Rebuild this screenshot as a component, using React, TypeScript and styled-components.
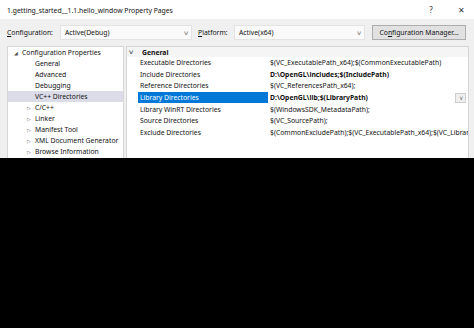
import styled, { createGlobalStyle } from 'styled-components';

const GlobalStyle = createGlobalStyle`
  html, body {
    margin: 0;
    padding: 0;
    background: #000;
  }
  body {
    font-family: 'Noto Sans', 'Open Sans', sans-serif;
    font-size: 6.8px;
    color: #111;
  }
`;

const Dialog = styled.div`
  width: 474px;
  height: 158px;
  background: #f0f0f0;
  display: flex;
  flex-direction: column;
  overflow: hidden;
`;

const TitleBar = styled.div`
  flex-shrink: 0;
  height: 19px;
  background: #fff;
  display: flex;
  align-items: center;
  padding-left: 7px;
`;

const Title = styled.div`
  flex: 1;
  padding-top: 1px;
`;

const TitleButtons = styled.div`
  display: flex;
  margin-right: -2px;
`;

const TitleButton = styled.div`
  width: 30px;
  text-align: center;
  font-size: 8px;
  color: #333;
`;

const Toolbar = styled.div`
  flex-shrink: 0;
  height: 27px;
  display: flex;
  align-items: center;
  padding: 0 8px 0 7px;
`;

const Label = styled.span<{ width: number }>`
  width: ${(p) => p.width}px;
  u {
    text-decoration: underline;
  }
`;

const Combo = styled.div<{ width: number }>`
  width: ${(p) => p.width}px;
  height: 15px;
  box-sizing: border-box;
  border: 1px solid #e3e3e3;
  background: #fafafa;
  display: flex;
  align-items: center;
  justify-content: space-between;
  padding: 0 3px 0 4px;
  margin-right: 6px;
`;

const Chevron = styled.span`
  color: #888;
  font-size: 6px;
  transform: scaleX(1.4);
`;

const Button = styled.div`
  margin-left: auto;
  width: 94px;
  height: 15px;
  box-sizing: border-box;
  border: 1px solid #adadad;
  background: #e1e1e1;
  display: flex;
  align-items: center;
  justify-content: center;
`;

const Main = styled.div`
  flex: 1;
  min-height: 0;
  display: flex;
  gap: 2px;
  padding: 0 5px 0 7px;
`;

const Panel = styled.div<{ width: number }>`
  width: ${(p) => p.width}px;
  box-sizing: border-box;
  border: 1px solid #d5d5d5;
  border-bottom: none;
  background: #fff;
  overflow: hidden;
`;

const TreeRow = styled.div<{ depth: number; selected?: boolean }>`
  height: 11px;
  display: flex;
  align-items: center;
  padding-left: ${(p) => 6 + p.depth * 13}px;
  background: ${(p) => (p.selected ? '#dcdce8' : 'transparent')};
  white-space: nowrap;
`;

const Expander = styled.span`
  width: 8px;
  font-size: 5px;
  color: #555;
`;

const GroupRow = styled.div`
  height: 10px;
  display: flex;
  align-items: center;
  font-weight: 700;
  background: #f5f5f5;
`;

const GroupToggle = styled.span`
  width: 12px;
  padding-left: 3px;
  font-size: 6px;
  color: #555;
  font-weight: 400;
  transform: scaleX(1.4);
`;

const PropRow = styled.div`
  height: 11.6px;
  display: flex;
  align-items: center;
  padding-left: 11px;
  white-space: nowrap;
`;

const PropName = styled.div<{ selected?: boolean }>`
  width: 130px;
  height: 100%;
  display: flex;
  align-items: center;
  padding-left: 2px;
  box-sizing: border-box;
  background: ${(p) => (p.selected ? '#0078d7' : 'transparent')};
  color: ${(p) => (p.selected ? '#fff' : 'inherit')};
`;

const PropValue = styled.div<{ bold?: boolean }>`
  flex: 1;
  min-width: 0;
  padding-left: 2px;
  font-weight: ${(p) => (p.bold ? 700 : 400)};
  display: flex;
  align-items: center;
  height: 100%;
`;

const ValueText = styled.span`
  flex: 1;
  overflow: hidden;
`;

const DropButton = styled.span`
  width: 11px;
  height: 10px;
  margin-right: 2px;
  box-sizing: border-box;
  border: 1px solid #cfcfcf;
  background: #eee;
  display: flex;
  align-items: center;
  justify-content: center;
  font-size: 6px;
  color: #777;
  font-weight: 400;
`;

const tree: { label: string; depth: number; expander?: string; selected?: boolean }[] = [
  { label: 'Configuration Properties', depth: 0, expander: '◢' },
  { label: 'General', depth: 1 },
  { label: 'Advanced', depth: 1 },
  { label: 'Debugging', depth: 1 },
  { label: 'VC++ Directories', depth: 1, selected: true },
  { label: 'C/C++', depth: 1, expander: '▷' },
  { label: 'Linker', depth: 1, expander: '▷' },
  { label: 'Manifest Tool', depth: 1, expander: '▷' },
  { label: 'XML Document Generator', depth: 1, expander: '▷' },
  { label: 'Browse Information', depth: 1, expander: '▷' },
  { label: 'Build Events', depth: 1, expander: '▷' },
];

const props: { name: string; value: string; bold?: boolean; selected?: boolean }[] = [
  { name: 'Executable Directories', value: '$(VC_ExecutablePath_x64);$(CommonExecutablePath)' },
  { name: 'Include Directories', value: 'D:\\OpenGL\\includes;$(IncludePath)', bold: true },
  { name: 'Reference Directories', value: '$(VC_ReferencesPath_x64);' },
  { name: 'Library Directories', value: 'D:\\OpenGL\\lib;$(LibraryPath)', bold: true, selected: true },
  { name: 'Library WinRT Directories', value: '$(WindowsSDK_MetadataPath);' },
  { name: 'Source Directories', value: '$(VC_SourcePath);' },
  {
    name: 'Exclude Directories',
    value: '$(CommonExcludePath);$(VC_ExecutablePath_x64);$(VC_LibraryPath_x64)',
  },
];

const App = () => (
  <>
    <GlobalStyle />
    <Dialog>
      <TitleBar>
        <Title>1.getting_started__1.1.hello_window Property Pages</Title>
        <TitleButtons>
          <TitleButton>?</TitleButton>
          <TitleButton>✕</TitleButton>
        </TitleButtons>
      </TitleBar>

      <Toolbar>
        <Label width={53}>
          <u>C</u>onfiguration:
        </Label>
        <Combo width={132}>
          Active(Debug)
          <Chevron>∨</Chevron>
        </Combo>
        <Label width={36}>
          <u>P</u>latform:
        </Label>
        <Combo width={131}>
          Active(x64)
          <Chevron>∨</Chevron>
        </Combo>
        <Button>
          Co<u>n</u>figuration Manager...
        </Button>
      </Toolbar>

      <Main>
        <Panel width={117}>
          {tree.map((item) => (
            <TreeRow key={item.label} depth={item.depth} selected={item.selected}>
              <Expander>{item.expander}</Expander>
              {item.label}
            </TreeRow>
          ))}
        </Panel>

        <Panel width={343}>
          <GroupRow>
            <GroupToggle>∨</GroupToggle>
            General
          </GroupRow>
          {props.map((p) => (
            <PropRow key={p.name}>
              <PropName selected={p.selected}>{p.name}</PropName>
              <PropValue bold={p.bold}>
                <ValueText>{p.value}</ValueText>
                {p.selected && <DropButton>∨</DropButton>}
              </PropValue>
            </PropRow>
          ))}
        </Panel>
      </Main>
    </Dialog>
  </>
);

export default App;
